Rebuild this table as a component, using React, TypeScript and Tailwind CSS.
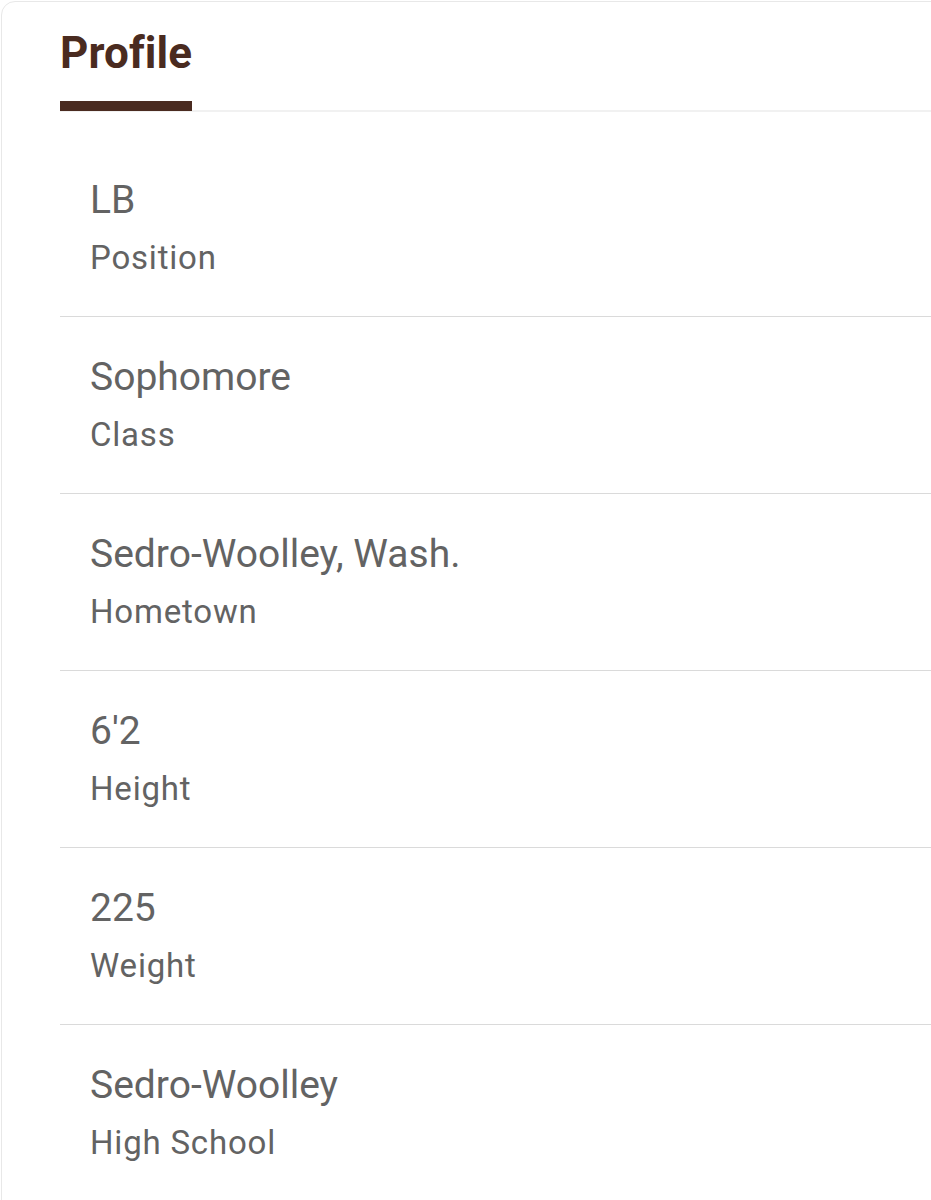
import React from 'react';

const rows = [
  { value: 'LB', label: 'Position' },
  { value: 'Sophomore', label: 'Class' },
  { value: 'Sedro-Woolley, Wash.', label: 'Hometown' },
  { value: "6'2", label: 'Height' },
  { value: '225', label: 'Weight' },
  { value: 'Sedro-Woolley', label: 'High School' },
];

export default function App() {
  return (
    <div className="w-[931px] h-[1200px] overflow-hidden bg-white font-['Roboto',sans-serif]">
      <div className="ml-[1px] mt-[1px] w-[1000px] min-h-[1260px] border border-[#e8e8e8] rounded-tl-[14px] bg-white">
        <div className="ml-[58px] border-b-2 border-[#f1f1f1]">
          <div className="inline-flex flex-col pt-[25px]">
            <span className="text-[44px] leading-[52px] font-bold tracking-[0.1px] text-[#4a2b20]">Profile</span>
            <div className="mt-[22px] -mb-[1px] h-[10px] bg-[#4a2b20]" />
          </div>
        </div>
        <div className="pt-[28px]">
          {rows.map((r) => (
            <div key={r.label} className="ml-[58px] border-b border-[#dadada] pl-[30px] pt-[36px] pb-[38px]">
              <div className="text-[39px] leading-[48px] text-[#636363]">{r.value}</div>
              <div className="mt-[14px] text-[33px] leading-[40px] tracking-[0.8px] text-[#636363]">{r.label}</div>
            </div>
          ))}
        </div>
      </div>
    </div>
  );
}
